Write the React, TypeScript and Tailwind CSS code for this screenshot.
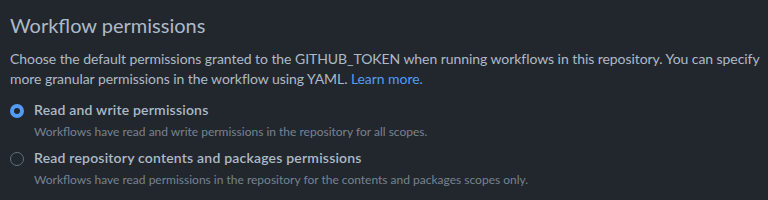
import React from 'react'

const options = [
  {
    label: 'Read and write permissions',
    note: 'Workflows have read and write permissions in the repository for all scopes.',
    checked: true,
  },
  {
    label: 'Read repository contents and packages permissions',
    note: 'Workflows have read permissions in the repository for the contents and packages scopes only.',
    checked: false,
  },
]

export default function App() {
  return (
    <div className="w-[768px] h-[200px] bg-[#22272e] text-[#adbac7] pl-[10px] pr-[4px] pt-[11px] overflow-hidden font-['Lato',sans-serif]">
      <h2 className="text-[20px] leading-[28px] font-normal">Workflow permissions</h2>
      <p className="mt-[10px] text-[14px] leading-[20px] tracking-[-0.06px]">
        Choose the default permissions granted to the GITHUB_TOKEN when running workflows in this repository. You can specify more granular permissions in the workflow using YAML.{' '}
        <a href="#" className="text-[#539bf5]">Learn more.</a>
      </p>

      <div className="mt-[11px] flex flex-col gap-[7px]">
        {options.map((opt) => (
          <label key={opt.label} className="flex items-start gap-[10px]">
            {opt.checked ? (
              <span className="mt-[4px] w-[14px] h-[14px] rounded-full border-[4px] border-[#539bf5] bg-[#22272e] shrink-0" />
            ) : (
              <span className="mt-[4px] w-[14px] h-[14px] rounded-full border border-[#636e7b] shrink-0" />
            )}
            <div className="flex flex-col gap-[3px]">
              <span className="text-[14px] leading-[20px] font-semibold tracking-[0.2px]">{opt.label}</span>
              <span className="text-[12px] leading-[18px] text-[#768390]">{opt.note}</span>
            </div>
          </label>
        ))}
      </div>
    </div>
  )
}
